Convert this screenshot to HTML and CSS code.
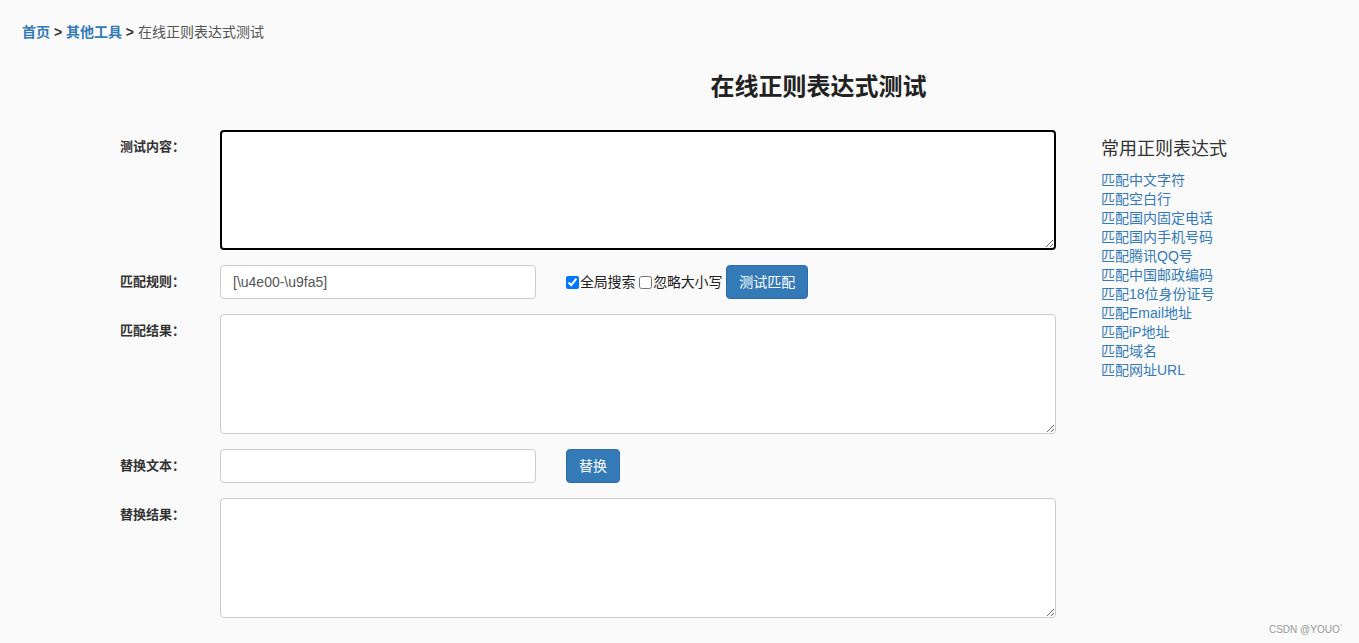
FILE: index.html
```html
<!DOCTYPE html>
<html lang="zh-CN">
<head>
    <meta charset="UTF-8">
    <meta name="viewport" content="width=device-width, initial-scale=1.0">
    <title>在线正则表达式测试</title>
    <link rel="stylesheet" href="styles.css">
</head>
<body>

    <div class="breadcrumb">
        <a href="#">首页</a> <span class="sep">&gt;</span> <a href="#">其他工具</a> <span class="sep">&gt;</span> <span class="current">在线正则表达式测试</span>
    </div>

    <h1 class="title">在线正则表达式测试</h1>

    <div class="page">
        <div class="main">
            <div class="row">
                <label class="label">测试内容：</label>
                <textarea class="box focused"></textarea>
            </div>
            <div class="row">
                <label class="label">匹配规则：</label>
                <div class="inline">
                    <input type="text" class="field" value="[\u4e00-\u9fa5]">
                    <div class="options">
                        <label class="check"><input type="checkbox" checked>全局搜索</label>
                        <label class="check"><input type="checkbox">忽略大小写</label>
                        <button class="btn">测试匹配</button>
                    </div>
                </div>
            </div>
            <div class="row">
                <label class="label">匹配结果：</label>
                <textarea class="box"></textarea>
            </div>
            <div class="row">
                <label class="label">替换文本：</label>
                <div class="inline">
                    <input type="text" class="field">
                    <div class="options">
                        <button class="btn">替换</button>
                    </div>
                </div>
            </div>
            <div class="row">
                <label class="label">替换结果：</label>
                <textarea class="box"></textarea>
            </div>
        </div>

        <div class="sidebar">
            <h3>常用正则表达式</h3>
            <ul class="links">
                <li><a href="#">匹配中文字符</a></li>
                <li><a href="#">匹配空白行</a></li>
                <li><a href="#">匹配国内固定电话</a></li>
                <li><a href="#">匹配国内手机号码</a></li>
                <li><a href="#">匹配腾讯QQ号</a></li>
                <li><a href="#">匹配中国邮政编码</a></li>
                <li><a href="#">匹配18位身份证号</a></li>
                <li><a href="#">匹配Email地址</a></li>
                <li><a href="#">匹配iP地址</a></li>
                <li><a href="#">匹配域名</a></li>
                <li><a href="#">匹配网址URL</a></li>
            </ul>
        </div>
    </div>

    <div class="watermark">CSDN @YOUO`</div>

</body>
</html>
```

FILE: styles.css
```css
body {
    margin: 0;
    background-color: #fafafa;
    color: #333;
    font-family: "Liberation Sans", "Noto Sans CJK SC", sans-serif;
    font-size: 14px;
    line-height: 20px;
}
a {
    color: #337ab7;
    text-decoration: none;
}
.breadcrumb {
    padding: 22px 22px 0;
    height: 20px;
    font-size: 14px;
}
.breadcrumb a {
    font-weight: bold;
}
.breadcrumb .sep {
    font-weight: bold;
    color: #333;
}
.breadcrumb .current {
    color: #555;
}
.title {
    margin: 28px 0 26px;
    padding-left: 278px;
    text-align: center;
    font-size: 24px;
    line-height: 34px;
    color: #222;
}
.page {
    display: flex;
    gap: 45px;
    padding-left: 120px;
}
.main {
    width: 936px;
}
.row {
    display: grid;
    grid-template-columns: 100px 836px;
    margin-bottom: 15px;
}
.label {
    padding-top: 7px;
    font-size: 13px;
    font-weight: bold;
    color: #333;
}
.box {
    box-sizing: border-box;
    display: block;
    width: 836px;
    height: 120px;
    margin: 0;
    padding: 6px 12px;
    border: 1px solid #ccc;
    border-radius: 4px;
    background-color: #fff;
    font-family: inherit;
    font-size: 14px;
}
.box.focused {
    border: 2px solid #000;
    outline: none;
}
.inline {
    display: flex;
    align-items: center;
    gap: 30px;
}
.field {
    box-sizing: border-box;
    width: 316px;
    height: 34px;
    margin: 0;
    padding: 6px 12px;
    border: 1px solid #ccc;
    border-radius: 4px;
    background-color: #fff;
    font-family: inherit;
    font-size: 14px;
    color: #555;
}
.options {
    display: flex;
    align-items: center;
}
.check {
    display: flex;
    align-items: center;
    margin-right: 4px;
    font-size: 14px;
    letter-spacing: -0.2px;
    color: #222;
}
.check input {
    width: 13px;
    height: 13px;
    margin: 0 1px 0 0;
}
.btn {
    height: 34px;
    padding: 6px 12px;
    border: 1px solid #2e6da4;
    border-radius: 4px;
    background-color: #337ab7;
    color: #fff;
    font-family: inherit;
    font-size: 14px;
    line-height: 20px;
    cursor: pointer;
}
.sidebar h3 {
    margin: 9px 0 12px;
    font-size: 18px;
    font-weight: normal;
    line-height: 20px;
    color: #333;
}
.links {
    margin: 0;
    padding: 0;
    list-style: none;
}
.links li {
    line-height: 19px;
    font-size: 14px;
}
.watermark {
    position: absolute;
    right: 16px;
    top: 623px;
    font-size: 10px;
    line-height: 14px;
    color: #999;
}
```
